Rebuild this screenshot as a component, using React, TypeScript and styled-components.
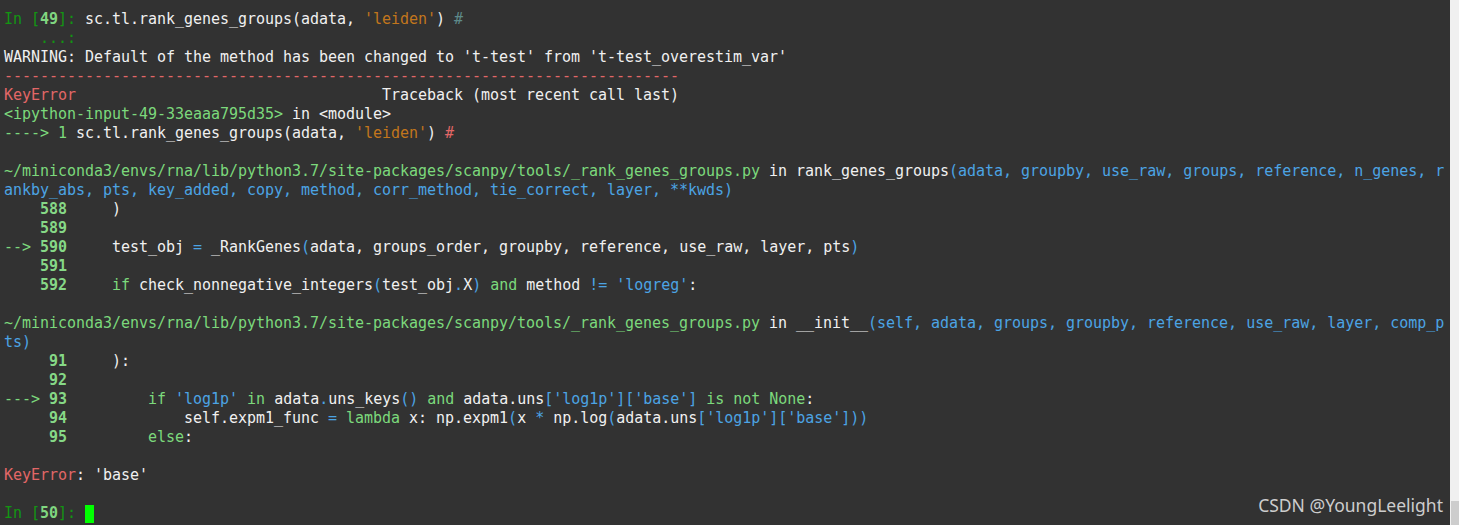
import React from "react";
import styled, { createGlobalStyle } from "styled-components";

const Global = createGlobalStyle`
  html, body { margin: 0; padding: 0; background: #f0f0f0; }
  body { width: 1459px; height: 525px; overflow: hidden; }
`;

type Tone =
  | "prompt"
  | "num"
  | "text"
  | "green"
  | "lineno"
  | "blue"
  | "red"
  | "orange"
  | "comment";

const toneColor: Record<Tone, string> = {
  prompt: "#139513",
  num: "#80d680",
  text: "#f0f0f0",
  green: "#7cd97c",
  lineno: "#86d886",
  blue: "#4ca4e4",
  red: "#e26767",
  orange: "#c2761c",
  comment: "#5e8a8a",
};

const Screen = styled.div`
  display: flex;
  width: 1459px;
  height: 525px;
`;

const Terminal = styled.div`
  position: relative;
  width: 1450px;
  height: 525px;
  background: #323232;
  padding: 10px 0 0 4px;
  box-sizing: border-box;
  overflow: hidden;
`;

const Line = styled.div`
  font-family: "DejaVu Sans Mono", monospace;
  font-size: 15px;
  letter-spacing: -0.03px;
  line-height: 19px;
  height: 19px;
  white-space: pre;
  color: #f0f0f0;
  display: flex;
  align-items: center;
`;

const Tok = styled.span<{ $tone: Tone }>`
  color: ${(p) => toneColor[p.$tone]};
  font-weight: ${(p) => (p.$tone === "num" || p.$tone === "lineno" ? 700 : 400)};
`;

const Cursor = styled.span`
  display: inline-block;
  width: 9px;
  height: 18px;
  background: #00ff00;
`;

const Watermark = styled.div`
  position: absolute;
  right: 7px;
  bottom: 9px;
  font-family: "Noto Sans", "DejaVu Sans", sans-serif;
  font-size: 17.5px;
  line-height: 22px;
  color: #cdcdcd;
`;

const Scrollbar = styled.div`
  width: 9px;
  height: 525px;
  background: #f0f0f0;
  display: flex;
  flex-direction: column;
  justify-content: flex-end;
  align-items: flex-end;
`;

const Thumb = styled.div`
  width: 8px;
  height: 24px;
  background: #cdcdcd;
`;

type Seg = [Tone, string];

const lines: Seg[][] = [
  [
    ["prompt", "In ["],
    ["num", "49"],
    ["prompt", "]: "],
    ["text", "sc.tl.rank_genes_groups(adata, "],
    ["orange", "'leiden'"],
    ["text", ") "],
    ["comment", "#"],
  ],
  [["prompt", "    ...:"]],
  [["text", "WARNING: Default of the method has been changed to 't-test' from 't-test_overestim_var'"]],
  [["red", "-".repeat(75)]],
  [
    ["red", "KeyError"],
    ["text", " ".repeat(34) + "Traceback (most recent call last)"],
  ],
  [
    ["green", "<ipython-input-49-33eaaa795d35>"],
    ["text", " in <module>"],
  ],
  [
    ["green", "----> 1 "],
    ["text", "sc.tl.rank_genes_groups(adata, "],
    ["orange", "'leiden'"],
    ["text", ") "],
    ["red", "#"],
  ],
  [],
  [
    ["green", "~/miniconda3/envs/rna/lib/python3.7/site-packages/scanpy/tools/_rank_genes_groups.py"],
    ["text", " in rank_genes_groups"],
    ["blue", "(adata, groupby, use_raw, groups, reference, n_genes, r"],
  ],
  [["blue", "ankby_abs, pts, key_added, copy, method, corr_method, tie_correct, layer, **kwds)"]],
  [
    ["lineno", "    588"],
    ["text", "     )"],
  ],
  [["lineno", "    589"]],
  [
    ["green", "--> "],
    ["lineno", "590"],
    ["text", "     test_obj "],
    ["blue", "="],
    ["text", " _RankGenes"],
    ["blue", "("],
    ["text", "adata, groups_order, groupby, reference, use_raw, layer, pts"],
    ["blue", ")"],
  ],
  [["lineno", "    591"]],
  [
    ["lineno", "    592"],
    ["text", "     "],
    ["green", "if"],
    ["text", " check_nonnegative_integers"],
    ["blue", "("],
    ["text", "test_obj"],
    ["blue", "."],
    ["text", "X"],
    ["blue", ")"],
    ["text", " "],
    ["green", "and"],
    ["text", " method "],
    ["blue", "!="],
    ["text", " "],
    ["blue", "'logreg'"],
    ["text", ":"],
  ],
  [],
  [
    ["green", "~/miniconda3/envs/rna/lib/python3.7/site-packages/scanpy/tools/_rank_genes_groups.py"],
    ["text", " in __init__"],
    ["blue", "(self, adata, groups, groupby, reference, use_raw, layer, comp_p"],
  ],
  [["blue", "ts)"]],
  [
    ["lineno", "     91"],
    ["text", "     ):"],
  ],
  [["lineno", "     92"]],
  [
    ["green", "---> "],
    ["lineno", "93"],
    ["text", "         "],
    ["green", "if"],
    ["text", " "],
    ["blue", "'log1p'"],
    ["text", " "],
    ["green", "in"],
    ["text", " adata"],
    ["blue", "."],
    ["text", "uns_keys"],
    ["blue", "()"],
    ["text", " "],
    ["green", "and"],
    ["text", " adata.uns"],
    ["blue", "['log1p']['base']"],
    ["text", " "],
    ["green", "is not None"],
    ["text", ":"],
  ],
  [
    ["lineno", "     94"],
    ["text", "             self.expm1_func "],
    ["blue", "="],
    ["text", " "],
    ["green", "lambda"],
    ["text", " x: np.expm1"],
    ["blue", "("],
    ["text", "x "],
    ["blue", "*"],
    ["text", " np.log"],
    ["blue", "("],
    ["text", "adata.uns"],
    ["blue", "['log1p']['base']))"],
  ],
  [
    ["lineno", "     95"],
    ["text", "         "],
    ["green", "else"],
    ["text", ":"],
  ],
  [],
  [
    ["red", "KeyError"],
    ["text", ": 'base'"],
  ],
  [],
];

export default function App() {
  return (
    <>
      <Global />
      <Screen>
        <Terminal>
          {lines.map((segs, i) => (
            <Line key={i}>
              {segs.map(([tone, text], j) => (
                <Tok key={j} $tone={tone}>
                  {text}
                </Tok>
              ))}
            </Line>
          ))}
          <Line>
            <Tok $tone="prompt">In [</Tok>
            <Tok $tone="num">50</Tok>
            <Tok $tone="prompt">]: </Tok>
            <Cursor />
          </Line>
          <Watermark>CSDN @YoungLeelight</Watermark>
        </Terminal>
        <Scrollbar>
          <Thumb />
        </Scrollbar>
      </Screen>
    </>
  );
}
